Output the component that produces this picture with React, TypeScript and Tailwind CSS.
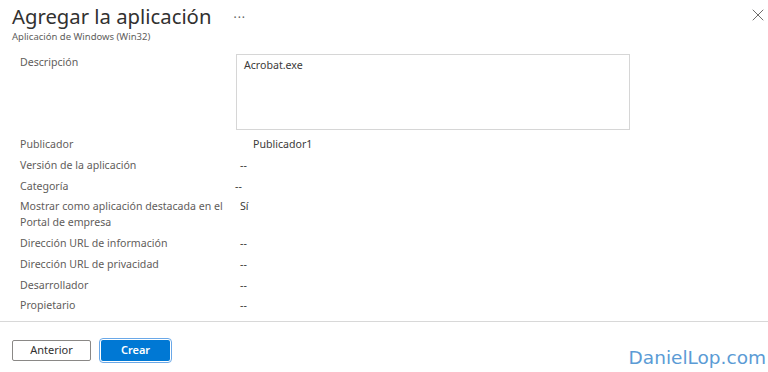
import { X } from "lucide-react";

const rows: { label: string[]; value: string; pad: string }[] = [
  { label: ["Publicador"], value: "Publicador1", pad: "pl-[18px]" },
  { label: ["Versión de la aplicación"], value: "--", pad: "pl-[5px]" },
  { label: ["Categoría"], value: "--", pad: "pl-0" },
  {
    label: ["Mostrar como aplicación destacada en el", "Portal de empresa"],
    value: "Sí",
    pad: "pl-[5px]",
  },
  { label: ["Dirección URL de información"], value: "--", pad: "pl-[5px]" },
  { label: ["Dirección URL de privacidad"], value: "--", pad: "pl-[5px]" },
  { label: ["Desarrollador"], value: "--", pad: "pl-[5px]" },
  { label: ["Propietario"], value: "--", pad: "pl-[5px]" },
];

export default function App() {
  return (
    <div
      className="flex h-[372px] w-[768px] flex-col bg-white text-[#323130]"
      style={{ fontFamily: '"Noto Sans", "Open Sans", sans-serif' }}
    >
      {/* header */}
      <div className="flex items-start justify-between pl-3 pr-0 pt-[4px]">
        <div>
          <div className="flex items-center">
            <h1 className="text-[20.3px] leading-[24px] text-[#323130]">
              Agregar la aplicación
            </h1>
            <span className="ml-[22px] mt-[-4px] text-[12px] tracking-[1px] text-[#605e5c]">
              ...
            </span>
          </div>
          <p className="mt-[2px] text-[9.5px] leading-[14px] text-[#605e5c]">
            Aplicación de Windows (Win32)
          </p>
        </div>
        <X className="mt-[1px] h-[20px] w-[20px] text-[#605e5c]" strokeWidth={1.1} />
      </div>

      {/* form */}
      <div className="flex flex-1 flex-col px-5 pt-[10px] text-[10.6px] leading-[16px] text-[#5f5d5b]">
        <div className="flex">
          <div className="w-[216px]">Descripción</div>
          <div className="flex h-[76px] w-[394px] items-start border border-[#d6d6d6] px-[7px] pt-[2px] text-[#3b3a39]">
            Acrobat.exe
          </div>
        </div>
        <div className="mt-[6px] flex flex-col gap-[4.75px]">
          {rows.map((r) => (
            <div key={r.label[0]} className="flex">
              <div className="w-[215px]">
                {r.label.map((l) => (
                  <div key={l}>{l}</div>
                ))}
              </div>
              <div className={r.pad + " text-[#3b3a39]"}>{r.value}</div>
            </div>
          ))}
        </div>
      </div>

      {/* footer */}
      <div className="border-t border-[#d8d8d8]" />
      <div className="flex h-[50px] items-start justify-between pl-3 pr-[2px] pt-[18px]">
        <div className="flex gap-[10px]">
          <button className="h-[21px] w-[79px] rounded-[2px] border border-[#8a8886] bg-white text-[11px] text-[#323130]">
            Anterior
          </button>
          <button className="h-[21px] w-[69px] rounded-[2px] bg-[#0078d4] text-[11px] font-semibold text-white outline outline-1 outline-offset-[1px] outline-[#6aa8e8]">
            Crear
          </button>
        </div>
        <span
          className="mt-[6px] text-[18.5px] leading-[24px] text-[#5b9bd5]"
          style={{ fontFamily: '"DejaVu Sans", sans-serif' }}
        >
          DanielLop.com
        </span>
      </div>
    </div>
  );
}
